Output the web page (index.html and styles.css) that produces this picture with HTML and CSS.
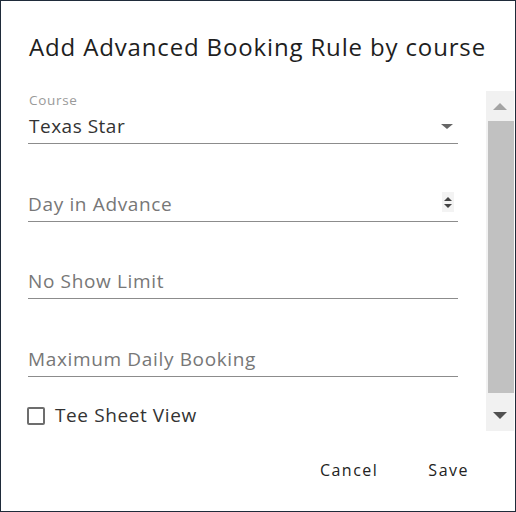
FILE: index.html
```html
<!DOCTYPE html>
<html>
<head>
<meta charset="utf-8">
<link rel="stylesheet" href="styles.css">
</head>
<body>
<div class="dialog">
  <h1 class="title">Add Advanced Booking Rule by course</h1>
  <div class="content">
    <div class="form">
      <div class="field first">
        <div class="label">Course</div>
        <div class="row">
          <span class="value">Texas Star</span>
          <span class="caret"></span>
        </div>
      </div>
      <div class="field">
        <div class="row">
          <span class="placeholder">Day in Advance</span>
          <span class="spinner"><span class="sp-up"></span><span class="sp-down"></span></span>
        </div>
      </div>
      <div class="field tight">
        <div class="row"><span class="placeholder">No Show Limit</span></div>
      </div>
      <div class="field">
        <div class="row"><span class="placeholder">Maximum Daily Booking</span></div>
      </div>
      <label class="check">
        <span class="box"></span>
        <span class="check-text">Tee Sheet View</span>
      </label>
    </div>
    <div class="scrollbar">
      <div class="sb-btn"><span class="sb-up"></span></div>
      <div class="sb-thumb"></div>
      <div class="sb-btn down"><span class="sb-down"></span></div>
    </div>
  </div>
  <div class="actions">
    <button class="btn cancel">Cancel</button>
    <button class="btn save">Save</button>
  </div>
</div>
</body>
</html>
```

FILE: styles.css
```css
html, body {
  margin: 0;
  padding: 0;
  background: #ffffff;
}
body {
  font-family: "Open Sans", "DejaVu Sans", sans-serif;
}
.dialog {
  box-sizing: border-box;
  width: 516px;
  height: 512px;
  border: 1px solid #1f2b3a;
  background: #ffffff;
  padding: 0 1px 0 27px;
  display: flex;
  flex-direction: column;
}
.title {
  margin: 0;
  padding: 31px 0 0 1px;
  height: 90px;
  flex: none;
  box-sizing: border-box;
  font-size: 24px;
  line-height: 30px;
  letter-spacing: 0.85px;
  font-weight: 400;
  color: #1e1e1e;
  white-space: nowrap;
}
.content {
  display: flex;
  gap: 28px;
  height: 340px;
  flex: none;
}
.form {
  width: 430px;
  display: flex;
  flex-direction: column;
}
.field {
  border-bottom: 1px solid #8c8c8c;
  margin-top: 44px;
}
.field.tight {
  margin-top: 43px;
}
.field.first {
  margin-top: 0;
}
.label {
  height: 19px;
  font-size: 13.5px;
  line-height: 19px;
  letter-spacing: 0.7px;
  color: #9a9a9a;
  padding-left: 1px;
}
.row {
  height: 33px;
  display: flex;
  align-items: center;
  justify-content: space-between;
}
.value {
  font-size: 19px;
  letter-spacing: 0.5px;
  color: #333333;
  padding-left: 1px;
  padding-bottom: 2px;
}
.placeholder {
  font-size: 19px;
  letter-spacing: 0.65px;
  color: #777777;
  padding-bottom: 2px;
}
.caret {
  width: 0;
  height: 0;
  border-left: 6px solid transparent;
  border-right: 6px solid transparent;
  border-top: 5px solid #666666;
  margin-right: 5px;
}
.spinner {
  width: 12px;
  height: 20px;
  background: #f3f3f3;
  display: flex;
  flex-direction: column;
  align-items: center;
  justify-content: center;
  gap: 3px;
  margin-right: 4px;
  margin-top: -5px;
}
.sp-up {
  width: 0;
  height: 0;
  border-left: 4px solid transparent;
  border-right: 4px solid transparent;
  border-bottom: 4px solid #444444;
}
.sp-down {
  width: 0;
  height: 0;
  border-left: 4px solid transparent;
  border-right: 4px solid transparent;
  border-top: 4px solid #444444;
}
.check {
  display: flex;
  align-items: center;
  gap: 10px;
  margin-top: 26px;
  margin-left: -1px;
  height: 26px;
}
.box {
  box-sizing: border-box;
  width: 18px;
  height: 18px;
  border: 2px solid #6d6d6d;
  border-radius: 2px;
}
.check-text {
  font-size: 19px;
  letter-spacing: 0.6px;
  color: #333333;
  padding-bottom: 2px;
}
.scrollbar {
  width: 28px;
  background: #f1f1f1;
  display: flex;
  flex-direction: column;
}
.sb-btn {
  height: 30px;
  display: flex;
  align-items: center;
  justify-content: center;
}
.sb-btn.down {
  margin-top: 7px;
}
.sb-up {
  width: 0;
  height: 0;
  border-left: 7px solid transparent;
  border-right: 7px solid transparent;
  border-bottom: 7px solid #a3a3a3;
}
.sb-down {
  width: 0;
  height: 0;
  border-left: 7px solid transparent;
  border-right: 7px solid transparent;
  border-top: 7px solid #505050;
}
.sb-thumb {
  height: 272px;
  margin-left: 2px;
  background: #c1c1c1;
}
.actions {
  display: flex;
  justify-content: flex-end;
  gap: 50px;
  padding-right: 45px;
  margin-top: 28px;
}
.btn {
  background: none;
  border: none;
  padding: 0;
  font-family: "Open Sans", "DejaVu Sans", sans-serif;
  font-size: 16px;
  letter-spacing: 1.5px;
  color: #222222;
  line-height: 22px;
}
```
